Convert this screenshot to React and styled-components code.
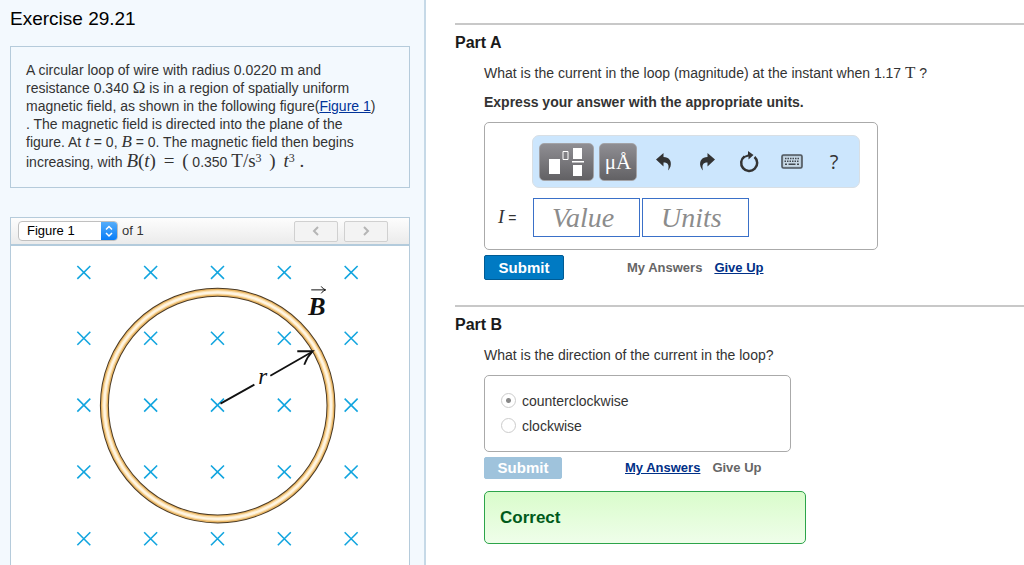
import React, { useState } from "react";
import styled, { createGlobalStyle, css } from "styled-components";

const sans = `"Liberation Sans", Arial, sans-serif`;
const serif = `"Liberation Serif", "Times New Roman", serif`;

const GlobalStyle = createGlobalStyle`
  *, *::before, *::after { box-sizing: border-box; }
  body { margin: 0; background: #fff; color: #333; font: 14px/18px ${sans}; }
  button, input, select { font-family: inherit; margin: 0; }
  h1, h2, p, fieldset, figure { margin: 0; padding: 0; }
`;

const Page = styled.main`
  display: grid;
  grid-template-columns: 426px minmax(0, 1fr);
  min-height: 100vh;
`;

const Sidebar = styled.aside`
  display: flex;
  flex-direction: column;
  padding: 8px 14px 0 10px;
  background: #f3f9fe;
  border-right: 2px solid #c6d9e7;
`;

const Title = styled.h1`
  color: #000;
  font-size: 19px;
  font-weight: 400;
  line-height: 22px;
`;

const Problem = styled.section`
  margin-top: 16px;
  padding: 14px 14px 16px 15px;
  border: 1px solid #b5cbdb;
  white-space: nowrap;
`;

const Formula = styled.p`
  padding-top: 2px;
`;

const MathText = styled.span`
  font-family: ${serif};
  font-size: ${(p) => (p.$large ? 19 : 17)}px;
  line-height: 0;
`;

const Operator = styled.span`
  margin: 0 3px;
`;

const Sup = styled.sup`
  font-size: 12px;
  line-height: 0;
  vertical-align: 5px;
`;

const InlineLink = styled.a`
  color: #003399;
  text-decoration: underline;
`;

const FigurePanel = styled.section`
  display: flex;
  flex: 1;
  flex-direction: column;
  margin-top: 29px;
  border: 1px solid #b5cbdb;
  border-bottom: 0;
  background: #fff;
`;

const FigureBar = styled.div`
  display: flex;
  align-items: center;
  height: 28px;
  padding: 0 21px 0 7px;
  border-bottom: 2px solid #b3cbdc;
  background: linear-gradient(#fdfdfd, #ebebeb);
`;

const SelectWrap = styled.div`
  display: grid;
  width: 100px;
  height: 20px;
  margin-right: 4px;
  overflow: hidden;
  border: 1px solid #c0c0c0;
  border-radius: 4px;
  background: #fff;

  > * { grid-area: 1 / 1; }
  > svg { justify-self: end; pointer-events: none; }
`;

const Select = styled.select`
  width: 100%;
  height: 18px;
  padding: 0 20px 0 8px;
  border: 0;
  appearance: none;
  background: none;
  color: #000;
  font-size: 13px;
  line-height: 18px;
`;

const FigureCount = styled.span`
  flex: 1;
  font-size: 13px;
`;

const PagerButton = styled.button`
  display: grid;
  place-items: center;
  width: 44px;
  height: 21px;
  margin-left: 6px;
  padding: 0;
  border: 1px solid #d0d0d0;
  border-radius: 2px;
  background: #f3f3f3;
`;

const Diagram = styled.svg`
  display: block;
  width: 100%;
`;

const Content = styled.div`
  padding: 23px 0 0 29px;
`;

const Part = styled.section`
  border-top: 2px solid #c8c8c8;
  padding-top: 8px;
  margin-bottom: 25px;
`;

const PartTitle = styled.h2`
  color: #1a1a1a;
  font-size: 16px;
  line-height: 20px;
`;

const PartBody = styled.div`
  padding: 11px 0 0 29px;
`;

const Instruction = styled.p`
  margin-top: 11px;
  font-weight: 700;
`;

const Box = styled.fieldset`
  min-width: 0;
  max-width: ${(p) => p.$width}px;
  border: 1px solid #aaa;
  border-radius: 5px;
`;

const AnswerBox = styled(Box)`
  margin-top: 11px;
  padding: 12px 17px 12px 47px;
`;

const ChoiceBox = styled(Box)`
  margin-top: 11px;
  padding: 12px 16px 13px;
`;

const Toolbar = styled.div`
  display: flex;
  align-items: center;
  height: 53px;
  padding: 0 6px;
  border: 1px solid #d8dfe5;
  border-radius: 7px;
  background: #cce6fd;
`;

const PaletteButton = styled.button`
  display: grid;
  place-items: center;
  width: ${(p) => p.$width}px;
  height: 38px;
  margin-right: 5px;
  padding: 0;
  border: 1px solid #a3a3a7;
  border-radius: 5px;
  background: linear-gradient(#8f8e93, #626164);
  color: #fff;
  font: 21px/36px ${serif};
`;

const ToolButtons = styled.div`
  display: flex;
  flex: 1;
  justify-content: space-between;
  padding: 0 5px 0 8px;
`;

const ToolButton = styled.button`
  display: grid;
  place-items: center;
  width: 28px;
  height: 28px;
  padding: 0;
  border: 0;
  background: none;
  color: #333;
  font-family: "Open Sans", sans-serif;
  font-size: 20px;
  line-height: 28px;
`;

const Fields = styled.div`
  display: flex;
  align-items: center;
  gap: 2px;
  margin: 10px 0 0 -34px;
`;

const FieldLabel = styled.label`
  width: 33px;
  font-size: 14px;
`;

const Field = styled.input`
  width: 107px;
  height: 39px;
  padding: 0 18px;
  border: 1px solid #3a70c8;
  border-radius: 0;
  background: #fff;
  font: italic 28px/34px ${serif};

  &::placeholder { color: #8c8c8c; opacity: 1; }
`;

const Actions = styled.div`
  display: flex;
  align-items: center;
  gap: 12px;
  margin-top: 5px;
  font-size: 13px;
  font-weight: 700;
`;

const Submit = styled.button`
  width: ${(p) => (p.disabled ? 78 : 80)}px;
  height: ${(p) => (p.disabled ? 22 : 25)}px;
  margin-right: 51px;
  padding: 0;
  border: 1px solid ${(p) => (p.disabled ? "#9fc3dc" : "#005b94")};
  border-radius: 2px;
  background: ${(p) => (p.disabled ? "#9fc3dc" : "#007ac3")};
  color: #fff;
  font-size: 15px;
  font-weight: 700;
  line-height: 20px;
`;

const actionText = css`
  color: ${(p) => (p.href ? "#003087" : "#666")};
  text-decoration: ${(p) => (p.href ? "underline" : "none")};
`;
const ActionLink = styled.a`${actionText}`;

const Choice = styled.label`
  display: flex;
  align-items: center;
  gap: 6px;
  height: 25px;
`;

const Radio = styled.input`
  width: 15px;
  height: 15px;
  border: 1px solid #ccc;
  border-radius: 50%;
  appearance: none;
  background: #fff;

  &:checked { background: radial-gradient(circle, #888 2px, #fff 3px); }
`;

const Feedback = styled.p`
  max-width: 322px;
  margin-top: 12px;
  padding: 16px 15px 15px;
  border: 1px solid #2ca44a;
  border-radius: 5px;
  background: linear-gradient(#d9fccb, #effeea);
  color: #005a1b;
  font-size: 17px;
  font-weight: 700;
  line-height: 20px;
`;

const columns = [73, 140, 207, 274, 341];
const rows = [26, 92, 159, 226, 293];

function LoopDiagram() {
  return (
    <Diagram viewBox="0 0 399 319" role="img" aria-label="Wire loop of radius r in a magnetic field B">
      <g stroke="#12a5df" strokeWidth="1.6" fill="none">
        {rows.flatMap((y) =>
          columns.map((x) => (
            <path key={`${x}-${y}`} d={`M${x - 6.5} ${y - 6}l13 13m0-13l-13 13`} />
          ))
        )}
      </g>
      <g fill="none">
        <circle cx="207.2" cy="160" r="113.6" stroke="#4a3a25" strokeWidth="9" />
        <circle cx="207.2" cy="160" r="113.6" stroke="#e9b563" strokeWidth="7" />
        <circle cx="207.2" cy="160" r="113.6" stroke="#fadfae" strokeWidth="4.6" />
        <circle cx="207.2" cy="160" r="113.6" stroke="#fff5e3" strokeWidth="2.2" />
      </g>
      <g fill="none" stroke="#111" strokeWidth="1.8">
        <path d="M210 158L244 139M260 130L302 106" />
        <path d="M287 105.500L302.500 105.500Q297 111 294 119" />
        <path d="M301 44h14m-4-3.500q2 3 4.500 3.500q-2.500 .500-4.500 3.500" strokeWidth="1" />
      </g>
      <g fill="#111" fontFamily="Liberation Serif, serif" fontStyle="italic">
        <text x="248" y="138" fontSize="23">r</text>
        <text x="298" y="69" fontSize="26" fontWeight="700">B</text>
      </g>
    </Diagram>
  );
}

function Chevron({ d }) {
  return (
    <svg width="8" height="10" viewBox="0 0 8 10" fill="none" stroke="#b5b5b5" strokeWidth="2" aria-hidden="true">
      <path d={d} />
    </svg>
  );
}

function SelectArrows() {
  return (
    <svg width="16" height="18" viewBox="0 0 16 18" aria-hidden="true">
      <defs>
        <linearGradient id="blue" x2="0" y2="1">
          <stop stopColor="#55adfa" />
          <stop offset="1" stopColor="#087df8" />
        </linearGradient>
      </defs>
      <rect width="16" height="18" fill="url(#blue)" />
      <path d="M5 7.500l3-3 3 3M5 11l3 3 3-3" fill="none" stroke="#fff" strokeWidth="1.500" />
    </svg>
  );
}

function TemplateIcon() {
  return (
    <svg width="36" height="30" viewBox="0 0 36 30" fill="#fff" aria-hidden="true">
      <path d="M0 12h11v15H0zM24 1h9v11H24zM23 14h12v1.500H23zM24 18h9v11H24z" />
      <path d="M14 4.500h5v8h-5z" fill="none" stroke="#fff" />
    </svg>
  );
}

const curvedArrow = "M0 6.500L7.500 0V4C13 4 16 8 14.500 13.500Q13.500 16 12 17.500C13.500 12 12 9.500 7.500 9.500V13.500Z";

function UndoIcon() {
  return <svg width="16" height="18" viewBox="0 0 16 18" fill="#333" aria-hidden="true"><path d={curvedArrow} /></svg>;
}

function RedoIcon() {
  return (
    <svg width="16" height="18" viewBox="0 0 16 18" fill="#333" aria-hidden="true">
      <path d={curvedArrow} transform="translate(16 0) scale(-1 1)" />
    </svg>
  );
}

function ResetIcon() {
  return (
    <svg width="20" height="22" viewBox="0 0 20 22" aria-hidden="true">
      <path d="M5.500 5.500A8 8 0 1 0 15.500 6" fill="none" stroke="#333" strokeWidth="2.500" />
      <path d="M9 0l5.500 4-5 4.500V5.500L5 7 4 5.500 9 3.500z" fill="#333" />
    </svg>
  );
}

function KeyboardIcon() {
  return (
    <svg width="22" height="15" viewBox="0 0 22 15" aria-hidden="true">
      <rect x="1" y="1" width="20" height="13" rx="1.500" fill="#a9bdcd" stroke="#4f565c" strokeWidth="1.600" />
      <rect x="2.500" y="2.500" width="17" height="10" fill="#c9d9e6" />
      <g stroke="#414950" strokeWidth="1.500">
        <path d="M4 4.500h15" strokeDasharray="1.500 1" />
        <path d="M3.500 7.200h15" strokeDasharray="1.500 1" />
        <path d="M4 10.200h2m1.500 0h7m1.500 0h2" />
      </g>
    </svg>
  );
}

export default function App() {
  const [direction, setDirection] = useState("counterclockwise");

  return (
    <>
      <GlobalStyle />
      <Page>
        <Sidebar>
          <Title>Exercise 29.21</Title>
          <Problem>
            <p>
              A circular loop of wire with radius 0.0220 <MathText>m</MathText> and<br />
              resistance 0.340 <MathText>Ω</MathText> is in a region of spatially uniform<br />
              magnetic field, as shown in the following figure(<InlineLink href="#figure">Figure 1</InlineLink>)<br />
              . The magnetic field is directed into the plane of the<br />
              figure. At <MathText><i>t</i></MathText> = 0, <MathText><i>B</i></MathText> = 0. The magnetic field then begins
            </p>
            <Formula>
              increasing, with <MathText $large><i>B</i>(<i>t</i>)<Operator> = </Operator>(</MathText> 0.350{" "}
              <MathText $large>T/s<Sup>3</Sup><Operator> ) </Operator><i>t</i><Sup>3</Sup> .</MathText>
            </Formula>
          </Problem>
          <FigurePanel id="figure">
            <FigureBar>
              <SelectWrap>
                <Select aria-label="Figure"><option>Figure 1</option></Select>
                <SelectArrows />
              </SelectWrap>
              <FigureCount>of 1</FigureCount>
              <PagerButton aria-label="Previous figure"><Chevron d="M6 1L2 5l4 4" /></PagerButton>
              <PagerButton aria-label="Next figure"><Chevron d="M2 1l4 4-4 4" /></PagerButton>
            </FigureBar>
            <LoopDiagram />
          </FigurePanel>
        </Sidebar>

        <Content>
          <Part>
            <PartTitle>Part A</PartTitle>
            <PartBody>
              <p>
                What is the current in the loop (magnitude) at the instant when 1.17 <MathText>T</MathText> ?
              </p>
              <Instruction>Express your answer with the appropriate units.</Instruction>
              <AnswerBox $width={394}>
                <Toolbar>
                  <PaletteButton $width={55} aria-label="Templates"><TemplateIcon /></PaletteButton>
                  <PaletteButton $width={38} aria-label="Units">μÅ</PaletteButton>
                  <ToolButtons>
                    <ToolButton aria-label="Undo"><UndoIcon /></ToolButton>
                    <ToolButton aria-label="Redo"><RedoIcon /></ToolButton>
                    <ToolButton aria-label="Reset"><ResetIcon /></ToolButton>
                    <ToolButton aria-label="Keyboard"><KeyboardIcon /></ToolButton>
                    <ToolButton aria-label="Help">?</ToolButton>
                  </ToolButtons>
                </Toolbar>
                <Fields>
                  <FieldLabel htmlFor="value"><MathText $large><i>I</i></MathText> =</FieldLabel>
                  <Field id="value" placeholder="Value" />
                  <Field aria-label="Units" placeholder="Units" />
                </Fields>
              </AnswerBox>
              <Actions>
                <Submit>Submit</Submit>
                <ActionLink>My Answers</ActionLink>
                <ActionLink href="#give-up">Give Up</ActionLink>
              </Actions>
            </PartBody>
          </Part>

          <Part>
            <PartTitle>Part B</PartTitle>
            <PartBody>
              <p>What is the direction of the current in the loop?</p>
              <ChoiceBox $width={307}>
                {["counterclockwise", "clockwise"].map((name) => (
                  <Choice key={name}>
                    <Radio
                      type="radio"
                      name="direction"
                      checked={direction === name}
                      onChange={() => setDirection(name)}
                    />
                    {name}
                  </Choice>
                ))}
              </ChoiceBox>
              <Actions>
                <Submit disabled>Submit</Submit>
                <ActionLink href="#answers">My Answers</ActionLink>
                <ActionLink>Give Up</ActionLink>
              </Actions>
              <Feedback>Correct</Feedback>
            </PartBody>
          </Part>
        </Content>
      </Page>
    </>
  );
}
